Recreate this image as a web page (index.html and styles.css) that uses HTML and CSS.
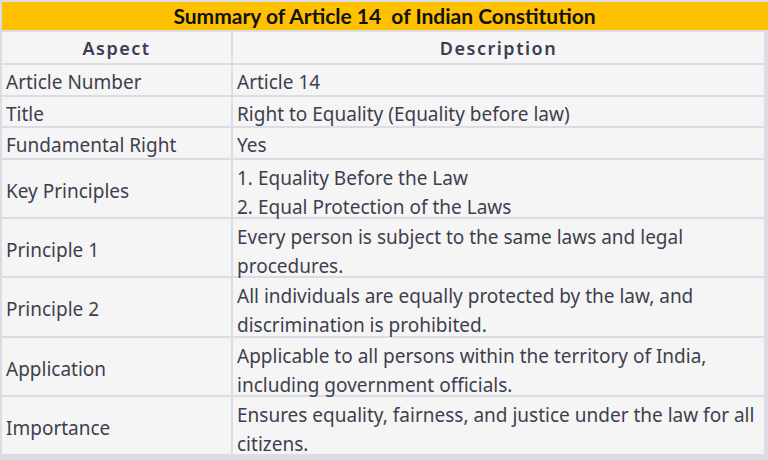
FILE: index.html
```html
<!DOCTYPE html>
<html>
<head>
<meta charset="utf-8">
<link rel="stylesheet" href="styles.css">
</head>
<body>
<div class="sheet">
  <div class="caption">Summary of Article 14&nbsp; of Indian Constitution</div>
  <div class="grid">
    <div class="cell head">Aspect</div>
    <div class="cell head">Description</div>

    <div class="cell label">Article Number</div>
    <div class="cell desc">Article 14</div>

    <div class="cell label">Title</div>
    <div class="cell desc">Right to Equality (Equality before law)</div>

    <div class="cell label">Fundamental Right</div>
    <div class="cell desc">Yes</div>

    <div class="cell label">Key Principles</div>
    <div class="cell desc top">1. Equality Before the Law<br>2. Equal Protection of the Laws</div>

    <div class="cell label">Principle 1</div>
    <div class="cell desc top">Every person is subject to the same laws and legal<br>procedures.</div>

    <div class="cell label">Principle 2</div>
    <div class="cell desc top">All individuals are equally protected by the law, and<br>discrimination is prohibited.</div>

    <div class="cell label">Application</div>
    <div class="cell desc top">Applicable to all persons within the territory of India,<br>including government officials.</div>

    <div class="cell label">Importance</div>
    <div class="cell desc top">Ensures equality, fairness, and justice under the law for all<br>citizens.</div>
  </div>
</div>
</body>
</html>
```

FILE: styles.css
```css
html, body {
  margin: 0;
  padding: 0;
  background: #dcdce4;
}
.sheet {
  width: 768px;
  height: 460px;
  overflow: hidden;
  padding-top: 2px;
  box-sizing: border-box;
}
.caption {
  margin-left: 2px;
  height: 28px;
  background: #ffc000;
  color: #111111;
  font-family: "Lato", sans-serif;
  font-weight: 700;
  font-size: 21px;
  line-height: 28px;
  text-align: center;
  padding-right: 1px;
}
.grid {
  display: grid;
  grid-template-columns: 229px 531px;
  grid-template-rows: 31px 30px 29px 30px 57px 57px 58px 57px 57px;
  gap: 2px;
  padding: 2px 0 0 2px;
}
.cell {
  box-sizing: border-box;
  background: #f5f5f5;
  color: #3e3f4e;
  font-family: "Noto Sans", sans-serif;
  font-size: 19px;
  letter-spacing: 0;
  line-height: 29px;
  display: flex;
  align-items: center;
  white-space: nowrap;
  padding-top: 5px;
}
.head {
  justify-content: center;
  font-weight: 600;
  font-size: 18px;
  letter-spacing: 1.5px;
  color: #3c3d52;
  padding-top: 2px;
}
.label {
  padding-left: 4px;
}
.desc {
  padding-left: 4px;
}
.top {
  align-items: flex-start;
  padding-top: 4px;
}
```
